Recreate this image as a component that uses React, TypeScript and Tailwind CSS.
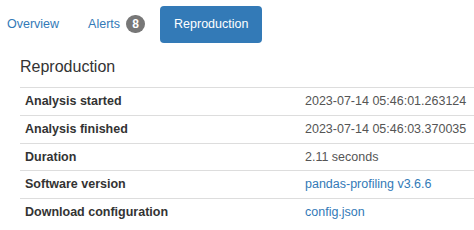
const rows: { label: string; value: string; link?: boolean }[] = [
  { label: "Analysis started", value: "2023-07-14 05:46:01.263124" },
  { label: "Analysis finished", value: "2023-07-14 05:46:03.370035" },
  { label: "Duration", value: "2.11 seconds" },
  { label: "Software version", value: "pandas-profiling v3.6.6", link: true },
  { label: "Download configuration", value: "config.json", link: true },
];

const App = () => {
  return (
    <div className="w-[474px] h-[230px] overflow-hidden bg-white font-['Liberation_Sans',Arial,sans-serif] text-[12.5px] text-[#333]">
      <nav className="mt-[5px] flex items-center">
        <a className="pl-[7px] pr-[14px] py-[10px] leading-[17px] text-[#337ab7]">Overview</a>
        <a className="flex items-center px-[15px] py-[10px] leading-[17px] text-[#337ab7]">
          Alerts
          <span className="ml-[6px] flex h-[18px] w-[19px] items-center justify-center rounded-full bg-[#777] text-[12px] font-bold text-white">
            8
          </span>
        </a>
        <a className="rounded-[4px] bg-[#337ab7] px-[14px] py-[10px] leading-[17px] text-white">Reproduction</a>
      </nav>

      <section className="ml-[20px]">
        <h2 className="mt-[14px] mb-[10px] text-[16px] leading-[20px] text-[#333]">Reproduction</h2>
        <table className="w-full border-collapse">
          <tbody>
            {rows.map((row) => (
              <tr key={row.label} className="border-t border-[#ddd]">
                <th className="w-[285px] py-[5px] pl-[5px] text-left font-bold leading-[16.75px] text-[#333]">
                  {row.label}
                </th>
                <td className="py-[5px] leading-[16.75px] text-[#555]">
                  {row.link ? <a className="text-[#337ab7]">{row.value}</a> : row.value}
                </td>
              </tr>
            ))}
          </tbody>
        </table>
      </section>
    </div>
  );
};

export default App;
